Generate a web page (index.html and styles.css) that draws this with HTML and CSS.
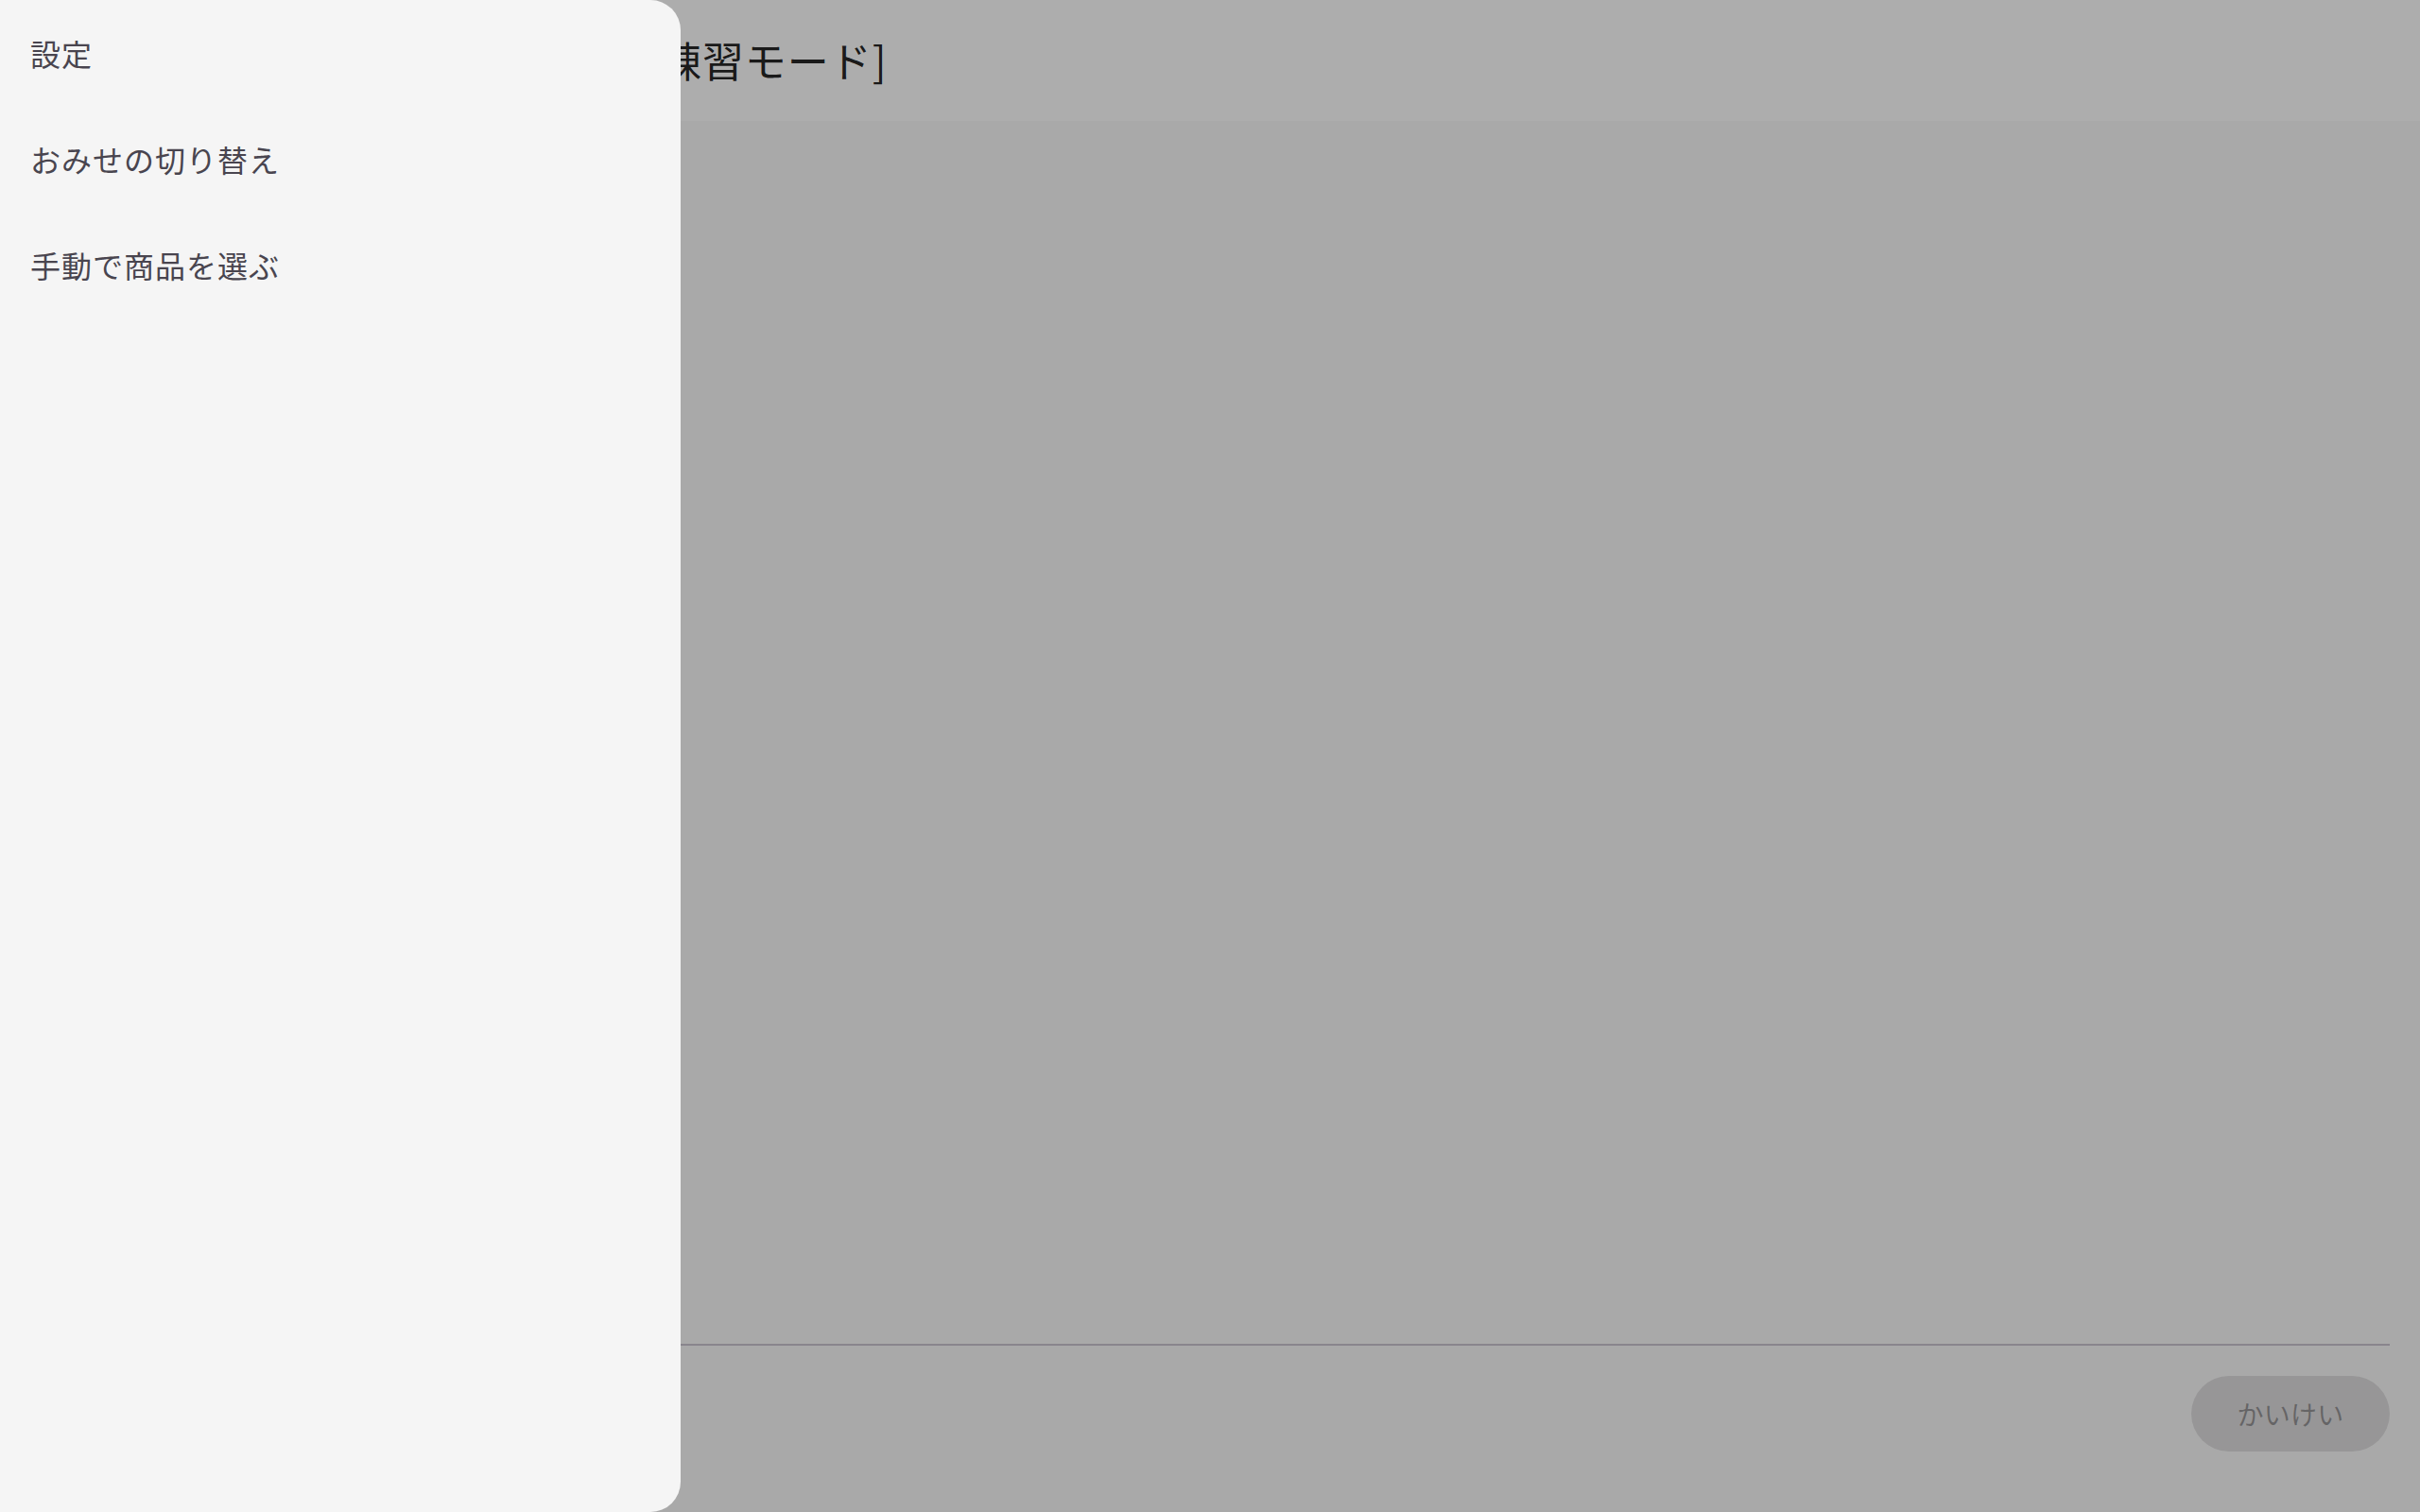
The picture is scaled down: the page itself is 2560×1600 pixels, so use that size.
FILE: index.html
```html
<!DOCTYPE html>
<html lang="ja">
<head>
<meta charset="utf-8">
<title>レジ [練習モード]</title>
<link rel="stylesheet" href="styles.css">
</head>
<body>
<div class="app">
  <header class="header">
    <h1 class="title">レジ [練習モード]</h1>
  </header>
  <main class="main"></main>
  <footer class="footer">
    <button class="checkout" disabled>かいけい</button>
  </footer>
</div>
<div class="scrim"></div>
<nav class="drawer">
  <ul class="menu">
    <li class="menu-item">設定</li>
    <li class="menu-item">おみせの切り替え</li>
    <li class="menu-item">手動で商品を選ぶ</li>
  </ul>
</nav>
</body>
</html>
```
FILE: styles.css
```css
html, body {
  margin: 0;
  padding: 0;
  width: 2560px;
  height: 1600px;
  overflow: hidden;
  font-family: "Noto Sans CJK JP", "Noto Sans", sans-serif;
}

.app {
  display: flex;
  flex-direction: column;
  height: 1600px;
  background: #fafafa;
}

.header {
  height: 128px;
  flex: none;
  display: flex;
  align-items: center;
  padding-left: 581px;
  background: #ffffff;
}

.title {
  margin: 0 0 2px;
  font-size: 44px;
  font-weight: 400;
  letter-spacing: 1px;
  color: rgba(0, 0, 0, 0.87);
  white-space: nowrap;
}

.main {
  flex: 1;
}

.footer {
  flex: none;
  margin: 0 32px;
  border-top: 2px solid #cac4d0;
  padding: 32px 0 64px;
  display: flex;
  justify-content: flex-end;
}

.checkout {
  width: 210px;
  height: 80px;
  border: none;
  border-radius: 40px;
  background: rgba(29, 27, 32, 0.12);
  color: rgba(29, 27, 32, 0.38);
  font-family: inherit;
  font-size: 28px;
  letter-spacing: 0.2px;
  padding: 0;
}

.scrim {
  position: fixed;
  inset: 0;
  background: rgba(0, 0, 0, 0.32);
}

.drawer {
  position: fixed;
  left: 0;
  top: 0;
  bottom: 0;
  width: 720px;
  background: #f5f5f5;
  border-radius: 0 32px 32px 0;
}

.menu {
  list-style: none;
  margin: 0;
  padding: 0;
}

.menu-item {
  height: 112px;
  display: flex;
  align-items: center;
  padding: 0 32px;
  font-size: 32px;
  letter-spacing: 1px;
  color: #49454f;
}
```
